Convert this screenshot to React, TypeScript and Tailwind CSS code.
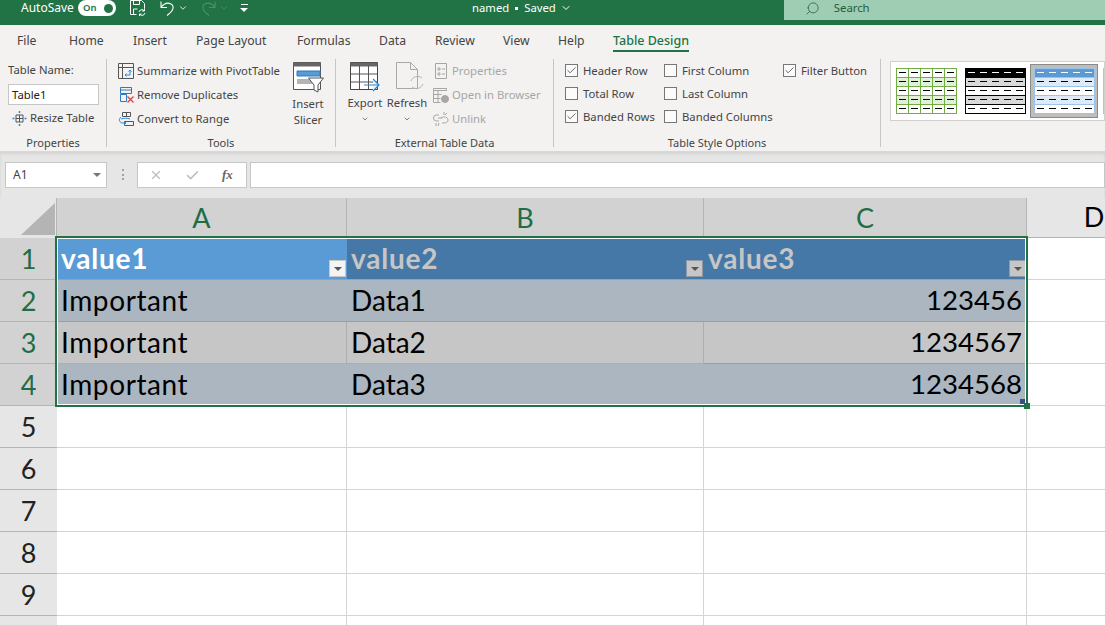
import { ChevronDown, Search, Check, X } from 'lucide-react';

const tabs = [
    { label: 'File', w: 'w-[52px]' },
    { label: 'Home', w: 'w-[64px]' },
    { label: 'Insert', w: 'w-[63px]' },
    { label: 'Page Layout', w: 'w-[101px]' },
    { label: 'Formulas', w: 'w-[82px]' },
    { label: 'Data', w: 'w-[56px]' },
    { label: 'Review', w: 'w-[68px]' },
    { label: 'View', w: 'w-[55px]' },
    { label: 'Help', w: 'w-[55px]' },
];

const tableRows = [
    { n: 2, a: 'Important', b: 'Data1', c: '123456', bg: 'bg-[#abb6c1]', line: '' },
    { n: 3, a: 'Important', b: 'Data2', c: '1234567', bg: 'bg-[#c6c6c6]', line: 'border-r border-[#aeaeae]' },
    { n: 4, a: 'Important', b: 'Data3', c: '1234568', bg: 'bg-[#abb6c1]', line: '' },
];

function Swatch({ border, header, headerDash, alt, sep, vertical }: { border: string; header: string; headerDash: string; alt: string; sep: string; vertical?: boolean }) {
    const rows = [0, 1, 2, 3, 4];
    const cols = [0, 1, 2, 3, 4];
    return (
        <svg className="shrink-0" width="61" height="46" viewBox="0 0 61 46">
            <rect x="0" y="0" width="61" height="46" fill="#fff" />
            {rows.map((r) => (
                <rect key={r} x="0" y={r * 9} width="61" height="10" fill={r === 0 ? header : r % 2 === 1 ? alt : '#fff'} />
            ))}
            {rows.slice(1).map((r) => (
                <line key={r} x1="0" x2="61" y1={r * 9 + 0.5} y2={r * 9 + 0.5} stroke={sep} />
            ))}
            {vertical && cols.slice(1).map((c) => (
                <line key={c} x1={c * 12 + 0.5} x2={c * 12 + 0.5} y1="0" y2="46" stroke={sep} />
            ))}
            {rows.map((r) =>
                cols.map((c) => (
                    <line key={`${r}-${c}`} x1={c * 12 + 3} x2={c * 12 + 10} y1={r * 9 + 4.5} y2={r * 9 + 4.5} stroke={r === 0 ? headerDash : '#000'} />
                ))
            )}
            <rect x="0.5" y="0.5" width="60" height="45" fill="none" stroke={border} />
        </svg>
    );
}

function CheckOption({ label, checked }: { label: string; checked?: boolean }) {
    return (
        <div className="flex h-[23px] items-center">
            <span className="flex h-[13px] w-[13px] items-center justify-center border border-[#777] bg-[#fbfbfb]">
                {checked && <Check size={11} strokeWidth={1.6} className="text-[#333]" />}
            </span>
            <span className="ml-[5px]">{label}</span>
        </div>
    );
}

function FilterButton({ active }: { active?: boolean }) {
    return (
        <span className={`absolute bottom-[2px] right-[1px] flex h-[17px] w-[17px] items-center justify-center border ${active ? 'border-[#c8c8c8] bg-[#f4f4f4]' : 'border-[#8f9aa6] bg-[#c6c6c6]'}`}>
            <span className="h-0 w-0 border-x-[4px] border-t-[4px] border-x-transparent border-t-[#555]" />
        </span>
    );
}

export default function App() {
    return (
        <div className="relative flex h-[625px] w-[1105px] flex-col overflow-hidden bg-white font-['Noto_Sans',sans-serif] text-[12px] text-[#444]">
            {/* title bar */}
            <div className="flex h-[25px] shrink-0 items-start bg-[#217346] text-white">
                <div className="flex h-[16px] items-center pl-[21px]">
                    <span className="w-[57px] text-[12px]">AutoSave</span>
                    <span className="flex h-[16px] w-[38px] items-center justify-between rounded-full bg-white pl-[5px] pr-[3px] text-[9.5px] font-semibold text-[#217346]">
                        On
                        <span className="h-[9px] w-[9px] rounded-full bg-[#217346]" />
                    </span>
                    <svg className="ml-[13px]" width="18" height="18" viewBox="0 0 18 18" fill="none" stroke="#fff" strokeWidth="1">
                        <path d="M1.5 1.5h11l3 3v5M1.5 1.5v14h6M4.5 1.5v4h6v-4M4.500 15v-5h4" />
                        <path d="M10 13a3 3 0 0 1 5-1.500M16 14a3 3 0 0 1-5 1.500M15.500 9.500v2.500h-2.500M10.500 17v-2h2" />
                    </svg>
                    <svg className="ml-[12px]" width="17" height="17" viewBox="0 0 17 17" fill="none" stroke="#fff" strokeWidth="1.100">
                        <path d="M2 1.500v6h6M2 7.500C5 3.500 9 2.500 12 4c3.500 2 3 6.500-4 11.500" />
                    </svg>
                    <ChevronDown className="ml-[2px]" size={10} strokeWidth={2} />
                    <svg className="ml-[12px]" width="17" height="17" viewBox="0 0 17 17" fill="none" stroke="#4f8f6c" strokeWidth="1.100">
                        <path d="M15 1.500v6H9M15 7.500C12 3.500 8 2.500 5 4c-3.500 2-3 6.500 4 11.500" />
                    </svg>
                    <ChevronDown className="ml-[2px] text-[#4f8f6c]" size={10} strokeWidth={2} />
                    <span className="ml-[11px] flex h-[8px] w-[8px] flex-col items-center justify-between">
                        <span className="h-px w-[7px] bg-white" />
                        <span className="h-0 w-0 border-x-[4px] border-t-[4px] border-x-transparent border-t-white" />
                    </span>
                </div>
                <div className="ml-[224px] flex h-[16px] items-center text-[11.3px]">
                    named
                    <span className="mx-[6px] h-[3px] w-[3px] bg-white" />
                    Saved
                    <ChevronDown className="ml-[4px]" size={12} strokeWidth={2} />
                </div>
                <div className="ml-[212px] flex h-[20px] flex-1 items-center bg-[#9fcdb3] pb-[4px] pl-[21px] text-[11.3px] text-[#1f5c3c]">
                    <Search size={15} strokeWidth={1.2} className="-scale-x-100" />
                    <span className="ml-[14px]">Search</span>
                </div>
            </div>

            {/* tabs */}
            <div className="flex h-[32px] shrink-0 items-start bg-[#f3f2f1] pl-[17px] pt-[7px] text-[12.2px] leading-[18px]">
                {tabs.map((t) => (
                    <span key={t.label} className={t.w}>{t.label}</span>
                ))}
                <span className="border-b-[2px] border-[#217346] text-[12.5px] font-medium text-[#217346]">Table Design</span>
            </div>

            {/* ribbon */}
            <div className="flex h-[94px] shrink-0 items-stretch bg-[#f3f2f1] pt-[2px] pb-[4px] text-[11.3px] leading-[16px]">
                <div className="flex w-[107px] flex-col border-r border-[#c8c6c4] pl-[8px]">
                    <div className="flex-1">
                        <div className="mt-[3px] h-[20px]">Table Name:</div>
                        <div className="mt-[2px] flex h-[21px] w-[91px] items-center border border-[#c6c6c6] bg-white pl-[3px] text-[#222]">Table1</div>
                        <div className="mt-[3px] flex h-[20px] items-center pl-[3px]">
                            <svg width="16" height="16" viewBox="0 0 16 16" fill="none">
                                <path d="M5 5h7v7H5zM5 8.500h7M8.500 5v7" stroke="#555" />
                                <path d="M8.500 1v2M8.500 14v2M1.500 8.500h2M13.500 8.500h2" stroke="#2b88d8" strokeWidth="1.500" />
                            </svg>
                            <span className="ml-[3px]">Resize Table</span>
                        </div>
                    </div>
                    <div className="-mb-[4px] h-[16px] pr-[8px] text-center text-[11px]">Properties</div>
                </div>

                <div className="flex w-[229px] flex-col border-r border-[#c8c6c4]">
                    <div className="flex flex-1">
                        <div className="w-[183px] pl-[11px]">
                            <div className="flex h-[24px] items-center">
                                <svg width="16" height="16" viewBox="0 0 16 16" fill="none">
                                    <path d="M.5.500h15v15H.5zM.5 4.500h15M4.500.500v15" stroke="#555" />
                                    <path d="M12 7v5H7M10.500 8.500 12 7l1.500 1.500M8.500 10.500 7 12l1.500 1.500" stroke="#2b88d8" />
                                </svg>
                                <span className="ml-[3px] whitespace-nowrap">Summarize with PivotTable</span>
                            </div>
                            <div className="flex h-[24px] items-center">
                                <svg width="16" height="18" viewBox="0 0 16 18" fill="none">
                                    <path d="M2.500 1.500h11v6h-11zM2.500 8.500h6v7h-6zM2.500 4h11" stroke="#2b79c2" />
                                    <path d="m9.500 10.500 6 6M15.500 10.500l-6 6" stroke="#e0403a" strokeWidth="1.300" />
                                </svg>
                                <span className="ml-[3px] whitespace-nowrap">Remove Duplicates</span>
                            </div>
                            <div className="flex h-[24px] items-center">
                                <svg width="16" height="16" viewBox="0 0 16 16" fill="none">
                                    <path d="M4.500 1.500h8v4h-8zM8.500 1.500v4M6.500 10.500h9v4h-9z" stroke="#555" />
                                    <path d="M3 6C.5 8 1 11 4 12h4M6 10l2 2-2 2M3 8c3-1 6-1 9 0" stroke="#2b88d8" />
                                </svg>
                                <span className="ml-[3px] whitespace-nowrap">Convert to Range</span>
                            </div>
                        </div>
                        <div className="flex w-[36px] flex-col items-center">
                            <svg className="mt-[3px]" width="31" height="31" viewBox="0 0 31 31" fill="none">
                                <path d="M.5.500h27v27H.5z" fill="#fff" stroke="#555" />
                                <path d="M.5.500h27v4H.5z" fill="#666" />
                                <path d="M4 9h23v5H4z" fill="#5b9bd5" stroke="#2b79c2" />
                                <path d="M4 17h17v5H4z" fill="#b4b4b4" />
                                <path d="M15.500 16h15l-5.500 7v7l-4-2v-5z" fill="#fff" stroke="#555" />
                            </svg>
                            <span className="mt-[3px] leading-[16px]">Insert</span>
                            <span className="leading-[16px]">Slicer</span>
                        </div>
                    </div>
                    <div className="-mb-[4px] h-[16px] text-center text-[11px]">Tools</div>
                </div>

                <div className="flex w-[218px] flex-col border-r border-[#c8c6c4]">
                    <div className="flex flex-1">
                        <div className="ml-[9px] flex w-[40px] flex-col items-center">
                            <svg className="ml-[1px] mt-[3px]" width="31" height="30" viewBox="0 0 31 30" fill="none">
                                <path d="M.5.500h27v27H.5z" fill="#fff" stroke="#444" />
                                <path d="M.5.500h27v4H.5z" fill="#666" />
                                <path d="M.5 12h27M.5 20h27M9.500 4v23M18.500 4v23" stroke="#555" />
                                <path d="M14 23h15M23 17l6 6-6 6" stroke="#2b88d8" strokeWidth="1.200" fill="#f3f2f1" />
                            </svg>
                            <span className="mt-[3px] leading-[16px]">Export</span>
                            <ChevronDown className="mt-[4px]" size={8} strokeWidth={2} />
                        </div>
                        <div className="ml-[2px] flex w-[40px] flex-col items-center text-[#444]">
                            <svg className="ml-[5px] mt-[3px]" width="30" height="30" viewBox="0 0 30 30" fill="none" stroke="#a8a8a8">
                                <path d="M1.500.500h14l7 7v19h-21zM15.500.500v7h7" />
                                <path d="M16 19a7 7 0 0 1 11-3M28 22a7 7 0 0 1-11 3" stroke="#b4b4b4" />
                            </svg>
                            <span className="mt-[3px] leading-[16px]">Refresh</span>
                            <ChevronDown className="mt-[4px]" size={8} strokeWidth={2} />
                        </div>
                        <div className="ml-[6px] text-[#a6a6a6]">
                            <div className="flex h-[24px] items-center">
                                <svg width="16" height="16" viewBox="0 0 16 16" fill="none" stroke="#a6a6a6">
                                    <path d="M2.500.500h11v15h-11zM5 5h2v2H5zM5 10h2v2H5zM9 6h3M9 11h3" />
                                </svg>
                                <span className="ml-[3px] whitespace-nowrap">Properties</span>
                            </div>
                            <div className="flex h-[24px] items-center">
                                <svg width="16" height="16" viewBox="0 0 16 16" fill="none" stroke="#a6a6a6">
                                    <path d="M.5 1.500h13v2H.5zM.5 3.500v12h7M.5 7.500h8M.5 11.500h7M5 3.500v12" />
                                    <circle cx="12" cy="12" r="3.500" fill="#a6a6a6" />
                                </svg>
                                <span className="ml-[3px] whitespace-nowrap">Open in Browser</span>
                            </div>
                            <div className="flex h-[24px] items-center">
                                <svg width="16" height="16" viewBox="0 0 16 16" fill="none" stroke="#a6a6a6">
                                    <path d="M6 4H3.500a3 3 0 0 0 0 6H6M8 7c3-2 7-1 7 2s-3 3-6 3M5 7h4M3 12v3M6 12l-1 3M11 1v3M14 2l-2 2" />
                                </svg>
                                <span className="ml-[3px] whitespace-nowrap">Unlink</span>
                            </div>
                        </div>
                    </div>
                    <div className="-mb-[4px] h-[16px] text-center text-[11px]">External Table Data</div>
                </div>

                <div className="flex w-[327px] flex-col border-r border-[#c8c6c4]">
                    <div className="flex flex-1 pl-[11px]">
                        <div className="w-[99px]">
                            <CheckOption label="Header Row" checked />
                            <CheckOption label="Total Row" />
                            <CheckOption label="Banded Rows" checked />
                        </div>
                        <div className="w-[119px]">
                            <CheckOption label="First Column" />
                            <CheckOption label="Last Column" />
                            <CheckOption label="Banded Columns" />
                        </div>
                        <div>
                            <CheckOption label="Filter Button" checked />
                        </div>
                    </div>
                    <div className="-mb-[4px] h-[16px] text-center text-[11px]">Table Style Options</div>
                </div>

                <div className="ml-[9px] mt-[2px] flex h-[60px] flex-1 items-center overflow-hidden border border-[#d2d0ce] bg-white pl-[5px]">
                    <Swatch border="#70ad47" header="#fff" headerDash="#000" alt="#e2efd9" sep="#70ad47" vertical />
                    <span className="ml-[8px] shrink-0">
                        <Swatch border="#000" header="#000" headerDash="#fff" alt="#d9d9d9" sep="#000" />
                    </span>
                    <span className="ml-[4px] flex h-[54px] w-[68px] shrink-0 items-center justify-center border border-[#8a8a88] bg-[#bdbdbd]">
                        <Swatch border="#9dc3e6" header="#5b9bd5" headerDash="#fff" alt="#deeaf6" sep="#9dc3e6" />
                    </span>
                    <span className="ml-[5px] h-[46px] w-[4px] shrink-0 border border-[#f4b183] bg-[#ed7d31]" />
                </div>
            </div>

            {/* formula bar */}
            <div className="flex h-[47px] shrink-0 items-start border-t border-[#d8d8d8] bg-[#e6e6e6] pl-[5px] pt-[10px] shadow-[inset_0_2px_3px_rgba(0,0,0,0.08)]">
                <div className="flex h-[26px] w-[102px] items-center justify-between border border-[#c6c6c6] bg-white pl-[7px] pr-[5px] text-[#444]">
                    A1
                    <span className="h-0 w-0 border-x-[4px] border-t-[4px] border-x-transparent border-t-[#777]" />
                </div>
                <div className="ml-[15px] mt-[7px] flex h-[11px] flex-col justify-between">
                    <span className="h-[2px] w-[2px] bg-[#a0a0a0]" />
                    <span className="h-[2px] w-[2px] bg-[#a0a0a0]" />
                    <span className="h-[2px] w-[2px] bg-[#a0a0a0]" />
                </div>
                <div className="ml-[13px] flex h-[26px] w-[110px] items-center border border-[#c6c6c6] bg-white">
                    <X className="ml-[11px] text-[#bdbdbd]" size={14} strokeWidth={2} />
                    <Check className="ml-[22px] text-[#bdbdbd]" size={15} strokeWidth={2.4} />
                    <span className="ml-[22px] font-['Liberation_Serif',serif] text-[13px] font-bold italic text-[#666]">fx</span>
                </div>
                <div className="ml-[3px] h-[26px] flex-1 border border-[#c6c6c6] bg-white" />
            </div>

            {/* sheet */}
            <div className="relative grid flex-1 grid-cols-[57px_290px_357px_323px_1fr] grid-rows-[40px] auto-rows-[42px] font-['Lato',sans-serif] text-[28px] text-black">
                <div className="flex items-end justify-end border-r border-[#b5b5b5] bg-[#e6e6e6] pb-[3px] pr-[1px]">
                    <svg width="34" height="32" viewBox="0 0 34 32">
                        <path d="M34 0v32H0z" fill="#b4b4b4" />
                    </svg>
                </div>
                {['A', 'B', 'C'].map((c) => (
                    <div key={c} className="flex items-center justify-center border-r border-[#b5b5b5] bg-[#d2d2d2] text-[27px] text-[#1f6d45]">{c}</div>
                ))}
                <div className="flex items-center justify-center border-b border-[#b5b5b5] bg-[#e6e6e6] pl-[56px] text-[27px]">D</div>

                <div className="flex items-center justify-center border-b border-[#b5b5b5] bg-[#d2d2d2] pt-[2px] text-[27px] text-[#1f6d45]">1</div>
                <div className="relative -mt-px border-b border-[#8ea3b8] bg-[#5b9bd5] pl-[4px] font-bold tracking-[0.8px] text-white">
                    value1
                    <FilterButton active />
                </div>
                <div className="relative -mt-px border-b border-[#8ea3b8] bg-[#4577a7] pl-[4px] font-bold tracking-[0.8px] text-[#c6c6c6]">
                    value2
                    <FilterButton />
                </div>
                <div className="relative -mt-px border-b border-[#8ea3b8] bg-[#4577a7] pl-[4px] font-bold tracking-[0.8px] text-[#c6c6c6]">
                    value3
                    <FilterButton />
                </div>
                <div className="border-b border-[#d4d4d4]" />

                {tableRows.map((r) => (
                    <div key={r.n} className="contents">
                        <div className="flex items-center justify-center border-b border-[#b5b5b5] bg-[#d2d2d2] pt-[2px] text-[27px] text-[#1f6d45]">{r.n}</div>
                        <div className={`flex items-center border-b border-[#8ea3b8] pb-[2px] pl-[4px] tracking-[0.6px] ${r.bg} ${r.line}`}>{r.a}</div>
                        <div className={`flex items-center border-b border-[#8ea3b8] pb-[2px] pl-[4px] ${r.bg} ${r.line}`}>{r.b}</div>
                        <div className={`flex items-center justify-end border-b border-[#8ea3b8] pb-[2px] pr-[5px] text-[27.6px] ${r.bg}`}>{r.c}</div>
                        <div className="border-b border-[#d4d4d4]" />
                    </div>
                ))}

                {[5, 6, 7, 8, 9].map((n) => (
                    <div key={n} className="contents">
                        <div className="flex items-center justify-center border-b border-[#b5b5b5] bg-[#e6e6e6] pt-[2px] text-[27px] text-[#222]">{n}</div>
                        <div className="border-b border-r border-[#d4d4d4]" />
                        <div className="border-b border-r border-[#d4d4d4]" />
                        <div className="border-b border-r border-[#d4d4d4]" />
                        <div className="border-b border-[#d4d4d4]" />
                    </div>
                ))}

                {/* bottom partial row */}
                <div className="bg-[#e6e6e6]" />
                <div className="border-r border-[#d4d4d4]" />
                <div className="border-r border-[#d4d4d4]" />
                <div className="border-r border-[#d4d4d4]" />

                {/* selection outline */}
                <div className="pointer-events-none absolute left-[55px] top-[38px] h-[171px] w-[973px] border-2 border-[#217346]">
                    <div className="h-full w-full border border-white" />
                    <span className="absolute bottom-[1px] right-[1px] h-[5px] w-[5px] bg-[#3a4a8c]" />
                    <span className="absolute -bottom-[4px] -right-[4px] h-[6px] w-[6px] bg-[#217346]" />
                </div>
            </div>
        </div>
    );
}
